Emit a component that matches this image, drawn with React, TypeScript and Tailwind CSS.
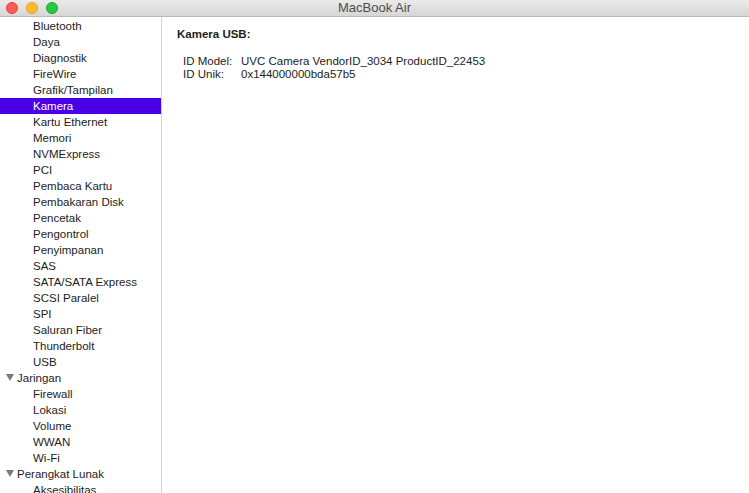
import React from "react";

const hw = ["Bluetooth","Daya","Diagnostik","FireWire","Grafik/Tampilan","Kamera","Kartu Ethernet","Memori","NVMExpress","PCI","Pembaca Kartu","Pembakaran Disk","Pencetak","Pengontrol","Penyimpanan","SAS","SATA/SATA Express","SCSI Paralel","SPI","Saluran Fiber","Thunderbolt","USB"];
const net = ["Firewall","Lokasi","Volume","WWAN","Wi-Fi"];

function Item({ label, selected }: { label: string; selected?: boolean }) {
  return (
    <div className={"h-[16px] leading-[16px] pl-[33px] whitespace-nowrap " + (selected ? "bg-[#4a00e6] text-white" : "text-[#1d1d1d]")}>{label}</div>
  );
}

function Group({ label }: { label: string }) {
  return (
    <div className="h-[16px] leading-[16px] flex items-center text-[#1d1d1d] whitespace-nowrap">
      <svg width="17" height="16" viewBox="0 0 17 16" className="shrink-0">
        <polygon points="6,4 14,4 10,11" fill="#7a7a7a" />
      </svg>
      <span>{label}</span>
    </div>
  );
}

export default function App() {
  return (
    <div className="w-[749px] h-[493px] overflow-hidden bg-white flex flex-col text-[11.5px]" style={{ fontFamily: '"Liberation Sans", Arial, sans-serif' }}>
      <div className="h-[17px] shrink-0 bg-gradient-to-b from-[#ebebeb] to-[#d6d6d6] border-b border-[#b9b9b9] flex items-center relative">
        <div className="flex items-center gap-[8px] pl-[6px]">
          <div className="w-[12px] h-[12px] rounded-full bg-[#fd5d55] border border-[#e0443e]" />
          <div className="w-[12px] h-[12px] rounded-full bg-[#fdbc2e] border border-[#dea123]" />
          <div className="w-[12px] h-[12px] rounded-full bg-[#28c840] border border-[#1aab29]" />
        </div>
        <div className="absolute inset-0 flex items-center justify-center text-[13px] text-[#4d4d4d]">MacBook Air</div>
      </div>
      <div className="flex flex-1 min-h-0">
        <div className="w-[162px] shrink-0 border-r border-[#d4d4d4] pt-[1px] overflow-hidden">
          {hw.map((h) => <Item key={h} label={h} selected={h === "Kamera"} />)}
          <Group label="Jaringan" />
          {net.map((h) => <Item key={h} label={h} />)}
          <Group label="Perangkat Lunak" />
          <Item label="Aksesibilitas" />
        </div>
        <div className="flex-1 pl-[15px] pt-[11px] text-[#1d1d1d]">
          <div className="font-bold leading-[13px]">Kamera USB:</div>
          <div className="mt-[14px] pl-[6px] grid grid-cols-[58px_auto] leading-[13px]">
            <div>ID Model:</div><div>UVC Camera VendorID_3034 ProductID_22453</div>
            <div>ID Unik:</div><div>0x144000000bda57b5</div>
          </div>
        </div>
      </div>
    </div>
  );
}
